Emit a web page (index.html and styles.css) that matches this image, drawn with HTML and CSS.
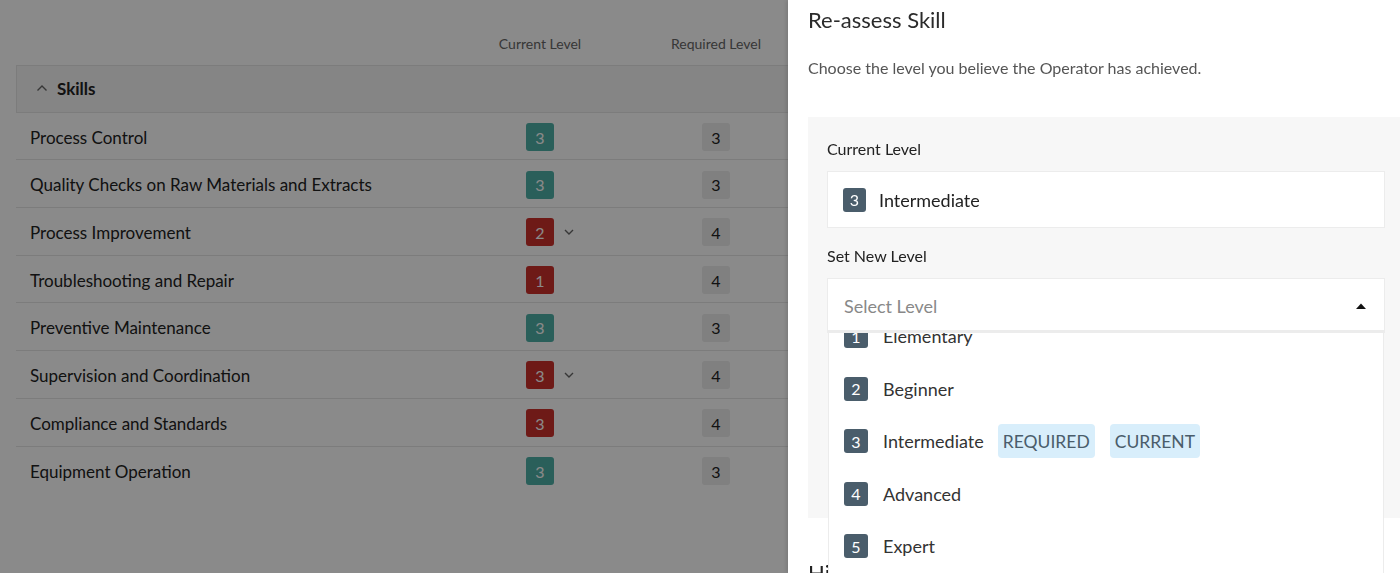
FILE: index.html
```html
<!DOCTYPE html>
<html lang="en">
<head>
<meta charset="utf-8">
<title>Re-assess Skill</title>
<link rel="stylesheet" href="styles.css">
</head>
<body>
<main class="page">
  <div class="table">
    <div class="thead">
      <div class="th-name"></div>
      <div class="th">Current Level</div>
      <div class="th">Required Level</div>
      <div></div>
    </div>
    <div class="group">
      <svg class="caret" width="12" height="8" viewBox="0 0 12 8"><path d="M1.5 6.5 L6 2 L10.5 6.5" fill="none" stroke="#666" stroke-width="1.4"/></svg>
      <span>Skills</span>
    </div>
    <div class="row">
      <div class="name">Process Control</div>
      <div class="cell"><span class="lv lv-ok">3</span></div>
      <div class="cell"><span class="lv lv-req">3</span></div>
      <div></div>
    </div>
    <div class="row">
      <div class="name">Quality Checks on Raw Materials and Extracts</div>
      <div class="cell"><span class="lv lv-ok">3</span></div>
      <div class="cell"><span class="lv lv-req">3</span></div>
      <div></div>
    </div>
    <div class="row">
      <div class="name">Process Improvement</div>
      <div class="cell"><span class="lv lv-bad">2</span><svg class="chev" width="12" height="8" viewBox="0 0 12 8"><path d="M2 2 L6 6 L10 2" fill="none" stroke="#666" stroke-width="1.4"/></svg></div>
      <div class="cell"><span class="lv lv-req">4</span></div>
      <div></div>
    </div>
    <div class="row">
      <div class="name">Troubleshooting and Repair</div>
      <div class="cell"><span class="lv lv-bad">1</span></div>
      <div class="cell"><span class="lv lv-req">4</span></div>
      <div></div>
    </div>
    <div class="row">
      <div class="name">Preventive Maintenance</div>
      <div class="cell"><span class="lv lv-ok">3</span></div>
      <div class="cell"><span class="lv lv-req">3</span></div>
      <div></div>
    </div>
    <div class="row">
      <div class="name">Supervision and Coordination</div>
      <div class="cell"><span class="lv lv-bad">3</span><svg class="chev" width="12" height="8" viewBox="0 0 12 8"><path d="M2 2 L6 6 L10 2" fill="none" stroke="#666" stroke-width="1.4"/></svg></div>
      <div class="cell"><span class="lv lv-req">4</span></div>
      <div></div>
    </div>
    <div class="row">
      <div class="name">Compliance and Standards</div>
      <div class="cell"><span class="lv lv-bad">3</span></div>
      <div class="cell"><span class="lv lv-req">4</span></div>
      <div></div>
    </div>
    <div class="row last">
      <div class="name">Equipment Operation</div>
      <div class="cell"><span class="lv lv-ok">3</span></div>
      <div class="cell"><span class="lv lv-req">3</span></div>
      <div></div>
    </div>
  </div>
</main>

<div class="backdrop"></div>

<aside class="drawer">
  <h2 class="title">Re-assess Skill</h2>
  <p class="subtitle">Choose the level you believe the Operator has achieved.</p>
  <section class="form">
    <div class="label">Current Level</div>
    <div class="current-box"><span class="sb sb-sm">3</span><span class="lvname">Intermediate</span></div>
    <div class="label label-2">Set New Level</div>
    <div class="select-wrap">
      <div class="select">
        <span class="placeholder">Select Level</span>
        <svg width="12" height="8" viewBox="0 0 12 8"><path d="M1 7 L6 1.5 L11 7 Z" fill="#111"/></svg>
      </div>
      <div class="menu">
        <ul class="options">
          <li class="opt"><span class="sb">1</span><span class="lvname">Elementary</span></li>
          <li class="opt"><span class="sb">2</span><span class="lvname">Beginner</span></li>
          <li class="opt"><span class="sb">3</span><span class="lvname">Intermediate</span><span class="tag">REQUIRED</span><span class="tag">CURRENT</span></li>
          <li class="opt"><span class="sb">4</span><span class="lvname">Advanced</span></li>
          <li class="opt"><span class="sb">5</span><span class="lvname">Expert</span></li>
        </ul>
      </div>
    </div>
  </section>
  <h3 class="history">History</h3>
</aside>
</body>
</html>
```

FILE: styles.css
```css
* { box-sizing: border-box; }
html, body { margin: 0; height: 100%; overflow: hidden; }
body {
  font-family: Lato, "Open Sans", "Liberation Sans", sans-serif;
  background: #fff;
  color: #333;
}

.page { padding: 23px 16px 0 16px; }

.table { width: 1368px; }
.thead, .row {
  display: grid;
  grid-template-columns: 436px 176px 176px 1fr;
  align-items: center;
}
.thead { height: 42px; }
.th {
  text-align: center;
  font-size: 14px;
  color: #666;
  padding-bottom: 2px;
}

.group {
  display: flex;
  align-items: center;
  height: 47.7px;
  border: 1px solid #e6e6e6;
  background: #f5f5f5;
  padding-left: 19px;
  font-size: 17px;
  font-weight: 700;
  color: #222;
}
.caret { margin-right: 9px; margin-top: -1px; }

.row {
  height: 47.7px;
  padding-top: 2px;
  border-bottom: 1px solid #e6e6e6;
}
.row.last { border-bottom: none; }
.name { padding-left: 14px; font-size: 17px; color: #222; }
.cell { display: flex; justify-content: center; align-items: center; position: relative; }
.lv {
  width: 28px; height: 28px;
  border-radius: 3px;
  display: flex; align-items: center; justify-content: center;
  font-size: 16px;
}
.lv-ok { background: #4fafa6; color: #fff; }
.lv-bad { background: #cc302b; color: #fff; }
.lv-req { background: #ececec; color: #222; }
.chev { position: absolute; left: 111px; top: 50%; margin-top: -4px; }

.backdrop {
  position: fixed; inset: 0;
  background: rgba(0, 0, 0, 0.46);
}

.drawer {
  position: fixed; top: 0; right: 0; bottom: 0;
  width: 612px;
  background: #fff;
  padding-left: 20px;
  box-shadow: -2px 0 4px rgba(0,0,0,0.12);
}
.title {
  margin: 5px 0 0 0;
  font-size: 22px; font-weight: 400; color: #2b2b2b;
  line-height: 30px;
}
.subtitle {
  margin: 22px 0 0 0;
  font-size: 16px; color: #555;
  line-height: 22px;
}
.form {
  margin-top: 38px;
  background: #f7f7f7;
  height: 401px;
  padding: 21px 15px 0 19px;
}
.label { font-size: 16px; color: #222; line-height: 22px; }
.label-2 { margin-top: 17px; }
.current-box {
  margin-top: 11px;
  height: 57px;
  background: #fff;
  border: 1px solid #ececec;
  display: flex; align-items: center;
  padding-left: 15px;
}
.sb {
  width: 24px; height: 24px; border-radius: 3px;
  background: #4a5d6b; color: #fff;
  display: inline-flex; align-items: center; justify-content: center;
  font-size: 16px; flex: none;
}
.sb-sm { width: 23px; }
.lvname { font-size: 18px; color: #222; margin-left: 13px; }
.opt .lvname { margin-left: 15px; color: #333; }

.select-wrap { margin-top: 11px; position: relative; }
.select {
  height: 55px;
  background: #fff;
  border: 1px solid #ececec;
  border-bottom: 3px solid #ececec;
  display: flex; align-items: center; justify-content: space-between;
  padding: 2px 17px 0 16px;
}
.placeholder { font-size: 18px; color: #888; }

.menu {
  position: absolute; left: 1px; right: 1px; top: 55px;
  height: 300px;
  background: #fff;
  border-left: 1px solid #ececec;
  border-right: 1px solid #ececec;
  overflow: hidden;
  z-index: 2;
}
.options { list-style: none; margin: -23px 0 0 0; padding: 0; }
.opt {
  height: 52.5px;
  display: flex; align-items: center;
  padding-left: 15px;
}
.tag {
  margin-left: 14px;
  height: 34px;
  padding: 0 5px;
  display: inline-flex; align-items: center;
  background: #d8eefb;
  color: #4a5d6b;
  font-size: 17.5px;
  border-radius: 4px;
}
.tag + .tag { margin-left: 15px; }

.history {
  margin: 41px 0 0 0;
  font-size: 22px; font-weight: 400; color: #222;
}
```
